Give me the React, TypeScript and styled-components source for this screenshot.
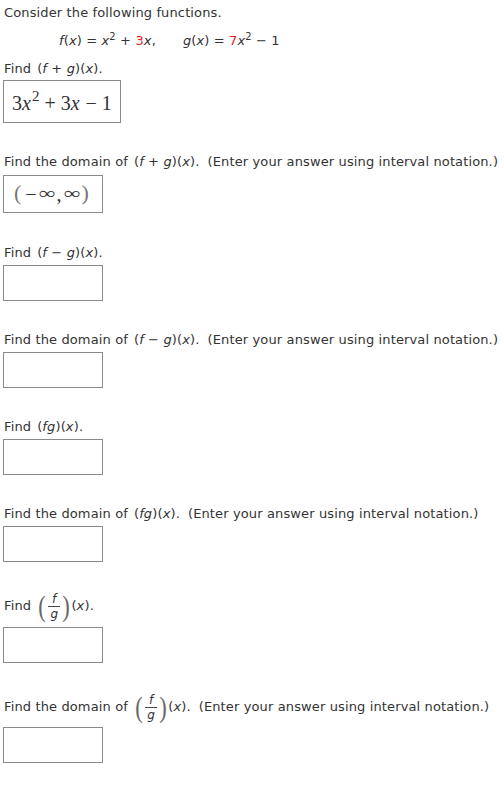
import styled, { createGlobalStyle } from "styled-components"

const GlobalStyle = createGlobalStyle`
  body {
    margin: 0;
    background: #fff;
  }
`

const Page = styled.div`
  display: flex;
  flex-direction: column;
  align-items: flex-start;
  padding: 4px 3px 20px;
  font-family: "DejaVu Sans", Verdana, sans-serif;
  font-size: 13px;
  letter-spacing: 0.13px;
  color: #333;
`

const Line = styled.div<{ $tall?: boolean; $gap?: number; $indent?: number }>`
  white-space: pre;
  line-height: 16px;
  height: 16px;
  padding: ${(p) => (p.$tall ? "6px 0 8px" : "1px 0 0")};
  margin-top: ${(p) => p.$gap ?? 0}px;
  padding-left: ${(p) => p.$indent ?? 1}px;
`

const Expr = styled.span<{ $space?: number }>`
  margin-left: ${(p) => p.$space ?? 6}px;
`

const I = styled.i`
  font-style: italic;
`

const Red = styled.span`
  color: #e8221f;
`

const Sup = styled.sup`
  font-size: 10px;
  line-height: 0;
  vertical-align: 5px;
`

const Note = styled.span`
  margin-left: 8px;
`

const Answer = styled.div<{ $w?: number; $h?: number; $mt?: number }>`
  box-sizing: border-box;
  display: flex;
  align-items: center;
  width: ${(p) => p.$w ?? 100}px;
  height: ${(p) => p.$h ?? 36}px;
  margin-top: ${(p) => p.$mt ?? 4}px;
  padding-left: 8px;
  border: 1px solid #8a8a8a;
  background: #fff;
`

const Math = styled.span`
  font-family: "Liberation Serif", "Times New Roman", serif;
  font-size: 20px;
  letter-spacing: 0;
  color: #333;
  white-space: pre;
  line-height: 1;
  margin-top: 3px;
`

const MathVar = styled.i`
  font-style: italic;
  margin-right: 1px;
`

const MathSup = styled.sup`
  font-size: 15px;
  line-height: 0;
  vertical-align: 9px;
`

const MathOp = styled.span`
  margin: 0 5px;
`

const Interval = styled.span`
  display: inline-flex;
  align-items: center;
  font-family: "Liberation Serif", "Times New Roman", serif;
  font-size: 20px;
  letter-spacing: 0;
  color: #333;
  margin-left: 2px;
`

const Paren = styled.span`
  font-size: 22px;
  color: #777;
  margin-top: -2px;
`

const Minus = styled.span`
  margin: 0 1px 0 4px;
`

const Infinity = styled.span`
  display: inline-block;
  width: 19px;
  text-align: center;
  font-size: 17px;
  transform: scaleX(1.4);
`

const Comma = styled.span`
  margin: 0 1px 0 0;
`

const FracWrap = styled.span`
  display: inline-flex;
  align-items: center;
  vertical-align: middle;
  margin: -8px 0;
`

const FracParen = styled.span`
  font-family: "Liberation Serif", serif;
  font-size: 30px;
  line-height: 30px;
  color: #666;
  display: inline-block;
  transform: scaleX(0.75);
  margin-top: -2px;
`

const Frac = styled.span`
  display: inline-flex;
  flex-direction: column;
  align-items: center;
  font-size: 12px;
  line-height: 12px;
  margin: 0 1px;
`

const FracBar = styled.span`
  display: block;
  width: 12px;
  height: 1px;
  background: #444;
  margin: 1px 0;
`

const FracDiv = () => (
  <FracWrap>
    <FracParen>(</FracParen>
    <Frac>
      <I>f</I>
      <FracBar />
      <I>g</I>
    </Frac>
    <FracParen>)</FracParen>
  </FracWrap>
)

const NOTE = "(Enter your answer using interval notation.)"

export default function App() {
  return (
    <>
      <GlobalStyle />
      <Page>
        <Line>Consider the following functions.</Line>
        <Line $gap={11} $indent={56}>
          <I>f</I>(<I>x</I>) = <I>x</I>
          <Sup>2</Sup> + <Red>3</Red>
          <I>x</I>,
          <Expr $space={27}>
            <I>g</I>(<I>x</I>) = <Red>7</Red>
            <I>x</I>
            <Sup>2</Sup> − 1
          </Expr>
        </Line>
        <Line $gap={11}>
          Find
          <Expr>
            (<I>f</I> + <I>g</I>)(<I>x</I>).
          </Expr>
        </Line>
        <Answer $w={118} $h={43} $mt={3}>
          <Math>
            3<MathVar>x</MathVar>
            <MathSup>2</MathSup>
            <MathOp>+</MathOp>3<MathVar>x</MathVar>
            <MathOp>−</MathOp>1
          </Math>
        </Answer>

        <Line $gap={30}>
          Find the domain of
          <Expr>
            (<I>f</I> + <I>g</I>)(<I>x</I>).
          </Expr>
          <Note>{NOTE}</Note>
        </Line>
        <Answer $h={38} $mt={5}>
          <Interval>
            <Paren>(</Paren>
            <Minus>−</Minus>
            <Infinity>∞</Infinity>
            <Comma>,</Comma>
            <Infinity>∞</Infinity>
            <Paren>)</Paren>
          </Interval>
        </Answer>

        <Line $gap={31}>
          Find
          <Expr>
            (<I>f</I> − <I>g</I>)(<I>x</I>).
          </Expr>
        </Line>
        <Answer />

        <Line $gap={30}>
          Find the domain of
          <Expr>
            (<I>f</I> − <I>g</I>)(<I>x</I>).
          </Expr>
          <Note>{NOTE}</Note>
        </Line>
        <Answer />

        <Line $gap={30}>
          Find
          <Expr>
            (<I>fg</I>)(<I>x</I>).
          </Expr>
        </Line>
        <Answer />

        <Line $gap={30}>
          Find the domain of
          <Expr>
            (<I>fg</I>)(<I>x</I>).
          </Expr>
          <Note>{NOTE}</Note>
        </Line>
        <Answer />

        <Line $gap={30} $tall>
          Find
          <Expr>
            <FracDiv />(<I>x</I>).
          </Expr>
        </Line>
        <Answer $mt={5} />

        <Line $gap={30} $tall>
          Find the domain of
          <Expr>
            <FracDiv />(<I>x</I>).
          </Expr>
          <Note>{NOTE}</Note>
        </Line>
        <Answer />
      </Page>
    </>
  )
}
